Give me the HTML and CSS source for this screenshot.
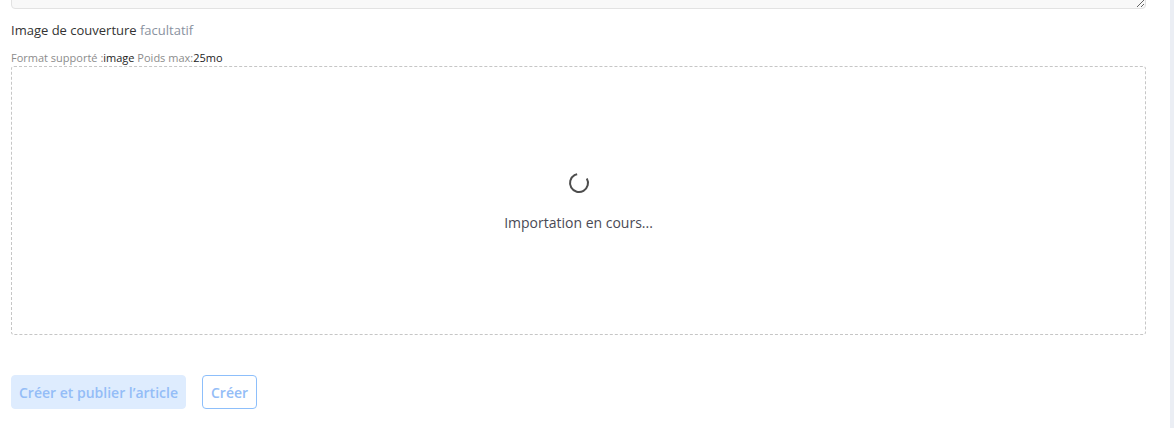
FILE: index.html
```html
<!DOCTYPE html>
<html lang="fr">

<head>
    <meta charset="UTF-8">
    <meta name="viewport" content="width=device-width, initial-scale=1.0">
    <title>Créer un article</title>
    <link rel="stylesheet" href="styles.css">
</head>

<body>
    <div class="page">
        <main class="form">
            <textarea class="description" aria-label="Description"></textarea>

            <div class="field">
                <label class="field-label">Image de couverture <span class="optional">facultatif</span></label>
                <p class="hint">Format supporté :<b>image</b> Poids max:<b>25mo</b></p>
                <div class="dropzone">
                    <svg class="spinner" width="22" height="22" viewBox="0 0 22 22">
                        <circle cx="11" cy="11" r="9" fill="none" stroke="#4d4d4d" stroke-width="2"
                            stroke-dasharray="45 11.5" transform="rotate(-30 11 11)" />
                    </svg>
                    <p class="status">Importation en cours...</p>
                </div>
            </div>

            <div class="actions">
                <button class="btn btn-primary" disabled>Créer et publier l’article</button>
                <button class="btn btn-outline" disabled>Créer</button>
            </div>
        </main>
        <div class="scroll-track"></div>
    </div>
</body>

</html>
```

FILE: styles.css
```css
/* page */
body {
    margin: 0;
    font-family: "Open Sans", "Noto Sans", sans-serif;
    color: #333;
    background: #fff;
}

.page {
    display: flex;
    height: 428px;
    overflow: hidden;
}

.form {
    flex: 1;
    padding: 0 24px 0 11px;
}

.scroll-track {
    width: 4px;
    background: #ebeef4;
}

/* textarea scrolled mostly out of view */
.description {
    display: block;
    box-sizing: border-box;
    width: 100%;
    height: 60px;
    margin: -51px 0 0;
    background: #f8f8f8;
    border: 1px solid #e2e2e2;
    border-radius: 4px;
    resize: vertical;
}

.field {
    margin-top: 11px;
}

.field-label {
    display: block;
    font-size: 13px;
    line-height: 20px;
    color: #333;
}

.optional {
    color: #8a92a0;
}

.hint {
    margin: 10px 0 0;
    font-size: 11px;
    line-height: 16px;
    color: #8c8c8c;
}

.hint b {
    font-weight: normal;
    color: #222;
}

.dropzone {
    box-sizing: border-box;
    height: 269px;
    border: 1px dashed #c6c6c6;
    border-radius: 3px;
    display: flex;
    flex-direction: column;
    align-items: center;
    justify-content: center;
    gap: 19px;
    padding-top: 4px;
}

.spinner {
    display: block;
}

.status {
    margin: 0;
    font-size: 14px;
    line-height: 20px;
    color: #4a4a55;
}

/* buttons */
.actions {
    display: flex;
    gap: 16px;
    margin-top: 40px;
}

.btn {
    height: 34px;
    font-family: inherit;
    font-size: 14px;
    font-weight: 600;
    border-radius: 4px;
    cursor: default;
}

.btn-primary {
    padding: 0 7px;
    background: #deecfe;
    border: 1px solid #deecfe;
    color: #94bdf7;
}

.btn-outline {
    padding: 0 8px;
    background: #fff;
    border: 1px solid #8dbffb;
    color: #94bdf7;
}
```
